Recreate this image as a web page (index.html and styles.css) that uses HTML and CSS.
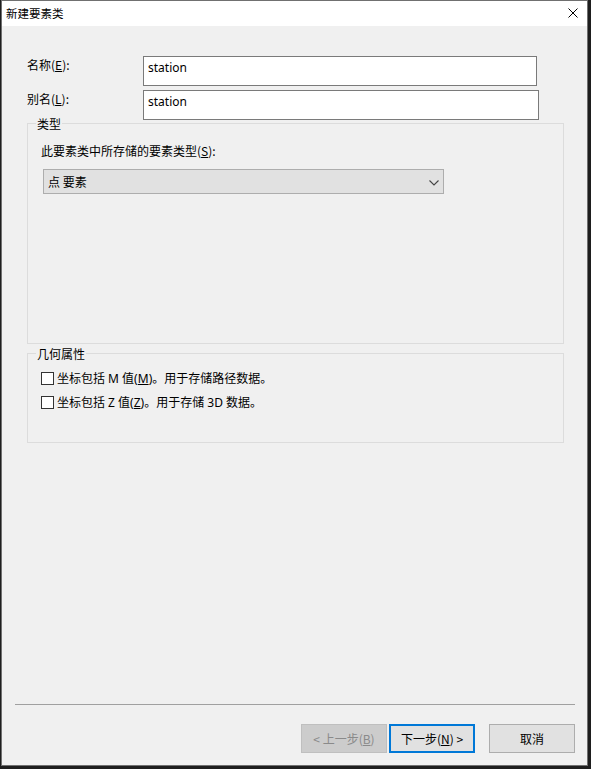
FILE: index.html
```html
<!DOCTYPE html>
<html lang="zh-CN">
<head>
<meta charset="utf-8">
<title>新建要素类</title>
<link rel="stylesheet" href="styles.css">
</head>
<body>
<div class="window">
  <div class="titlebar">
    <span class="title">新建要素类</span>
    <svg class="close" width="10" height="10" viewBox="0 0 10 10"><path d="M0.5 0.5 L9.5 9.5 M9.5 0.5 L0.5 9.5" stroke="#000" stroke-width="1" fill="none"/></svg>
  </div>
  <div class="content">
    <div class="form">
      <label class="lbl">名称(<u>E</u>):</label>
      <div class="input w1">station</div>
      <label class="lbl">别名(<u>L</u>):</label>
      <div class="input w2">station</div>
    </div>
    <div class="group g1">
      <div class="legend">类型</div>
      <div class="glabel">此要素类中所存储的要素类型(<u>S</u>):</div>
      <div class="select">
        <span>点 要素</span>
        <svg class="chev" width="10" height="6" viewBox="0 0 10 6"><path d="M0.5 0.5 L5 5 L9.5 0.5" stroke="#444" stroke-width="1.1" fill="none"/></svg>
      </div>
    </div>
    <div class="group g2">
      <div class="legend">几何属性</div>
      <div class="check"><span class="box"></span><span>坐标包括 M 值(<u>M</u>)。用于存储路径数据。</span></div>
      <div class="check"><span class="box"></span><span>坐标包括 Z 值(<u>Z</u>)。用于存储 3D 数据。</span></div>
    </div>
    <div class="footer">
      <div class="sep"></div>
      <div class="buttons">
        <button class="btn disabled">&lt; 上一步(<u>B</u>)</button>
        <button class="btn primary">下一步(<u>N</u>) &gt;</button>
        <button class="btn cancel">取消</button>
      </div>
    </div>
  </div>
</div>
</body>
</html>
```
FILE: styles.css
```css
* { box-sizing: border-box; }
html, body { margin: 0; padding: 0; }
body {
  background: #1e1e1e;
  width: 591px;
  height: 769px;
  overflow: hidden;
  font-family: "Noto Sans", "Noto Sans CJK SC", sans-serif;
  font-size: 12px;
  color: #000;
}
.window {
  margin-left: 1px;
  width: 587px;
  height: 766px;
  border: 1px solid #707070;
  background: #f0f0f0;
  display: flex;
  flex-direction: column;
}
.titlebar {
  height: 25px;
  background: #fff;
  display: flex;
  align-items: center;
  justify-content: space-between;
  padding: 0 9px 0 4px;
  flex: none;
}
.title {
  font-family: "Noto Sans CJK SC", sans-serif;
  font-size: 11.5px;
  line-height: 14px;
  margin-top: -1px;
}
.close { display: block; margin-top: -1px; }
.content {
  flex: 1;
  display: flex;
  flex-direction: column;
  padding: 30px 0 0 25px;
}
.form {
  display: grid;
  grid-template-columns: 116px auto;
  row-gap: 4px;
  align-items: start;
}
.lbl {
  line-height: 17px;
  font-family: "Noto Sans CJK SC", sans-serif;
}
.input {
  height: 30px;
  background: #fff;
  border: 1px solid #7a7a7a;
  padding: 2px 4px;
  line-height: 17px;
}
.w1 { width: 394px; }
.w2 { width: 396px; }
.group {
  width: 537px;
  border: 1px solid #dcdcdc;
  padding-left: 13px;
}
.g1 { margin-top: 3px; height: 221px; }
.g2 { margin-top: 9px; height: 90px; }
.legend {
  display: block;
  width: fit-content;
  margin-top: -9px;
  margin-left: -5px;
  padding: 0 1px;
  line-height: 17px;
  height: 17px;
  background: #f0f0f0;
  font-family: "Noto Sans CJK SC", sans-serif;
}
.glabel {
  margin-top: 10px;
  line-height: 17px;
  font-family: "Noto Sans CJK SC", sans-serif;
}
.select {
  margin-top: 10px;
  margin-left: 2px;
  width: 401px;
  height: 25px;
  background: #e1e1e1;
  border: 1px solid #adadad;
  padding: 0 4px;
  line-height: 23px;
  display: flex;
  justify-content: space-between;
  align-items: center;
  font-family: "Noto Sans CJK SC", sans-serif;
}
.chev { display: block; margin-top: 2px; }
.check {
  display: flex;
  align-items: center;
  gap: 3px;
  line-height: 17px;
  margin-top: 7px;
  font-family: "Noto Sans", "Noto Sans CJK SC", sans-serif;
}
.legend + .check { margin-top: 8px; }
.box {
  width: 13px;
  height: 13px;
  border: 1px solid #333;
  background: #fff;
  flex: none;
}
.footer {
  margin-top: auto;
  margin-left: -25px;
  padding: 0 12px 12px 13px;
}
.sep {
  height: 1px;
  background: #a0a0a0;
}
.buttons {
  margin-top: 19px;
  display: flex;
  justify-content: flex-end;
}
.btn {
  width: 86px;
  height: 29px;
  font-family: "Noto Sans CJK SC", sans-serif;
  font-size: 12px;
  background: #e1e1e1;
  border: 1px solid #adadad;
  color: #000;
  padding: 0;
  line-height: 17px;
}
.disabled {
  background: #cccccc;
  border-color: #bfbfbf;
  color: #8a8a8a;
}
.primary {
  margin-left: 2px;
  border: 2px solid #0078d7;
}
.cancel { margin-left: 14px; }
u { text-underline-offset: 1px; }
```
